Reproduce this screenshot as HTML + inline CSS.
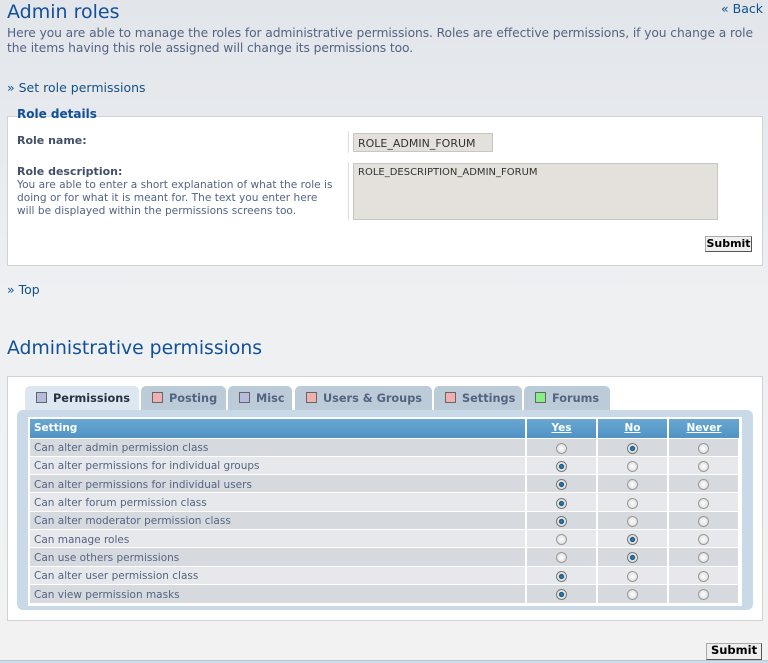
<!DOCTYPE html>
<html><head><meta charset="utf-8"><style>
*{box-sizing:border-box;margin:0;padding:0}
body{width:768px;height:663px;overflow:hidden;font-family:"DejaVu Sans","Liberation Sans",sans-serif;background:linear-gradient(#e2e5ea 0,#eef0f2 300px,#f2f2f2 663px);position:relative;color:#536482}
.a{position:absolute;white-space:nowrap}
h1{position:absolute;left:7px;top:1px;font-weight:normal;font-size:19px;color:#115098;font-family:"DejaVu Sans",sans-serif}
.desc{left:7px;top:26px;font-size:12.3px;line-height:15px;color:#536482;white-space:normal;width:760px;letter-spacing:-0.1px}
.lnk{font-size:12.5px;color:#105289}
.box{position:absolute;background:#fff;border:1px solid #d2d2d2}
.lbl{font-size:11px;font-weight:bold;color:#425067}
.sm{font-size:10.6px;color:#536482;line-height:13px}
.inp{position:absolute;background:#e4e1dc;border:1px solid #c9c6c0;font-size:11px;color:#333;padding:3px 4px}
.btn{position:absolute;background:#efefef;border:1px solid #666;border-color:#aaa #555 #555 #aaa;font-size:11px;font-weight:bold;color:#000;text-align:center;line-height:13px}
.tab{position:absolute;top:386px;height:24px;background:#bccbd8;border-radius:5px 5px 0 0;font-size:11.3px;font-weight:bold;color:#536482;padding:6px 0 0 11px}
.tab i{display:inline-block;width:11px;height:11px;border:1px solid #666;vertical-align:-1px;margin-right:6px}
table{position:absolute;left:30px;top:419px;width:710px;border-collapse:collapse;font-size:10.5px}
th{background:linear-gradient(#6aa7d1,#4f93c4);color:#fff;height:19px;font-size:10.5px;border-right:2px solid #fff;text-align:center}
th:first-child{text-align:left;padding-left:4px}
th u{color:#fff}
td{height:18.3px;border-right:2px solid #fff;border-top:1px solid #fff;text-align:center;color:#536482;padding-top:2px}
td:first-child{text-align:left;padding-left:4px}
tr:nth-child(odd) td{background:#e6e8eb}
tr:nth-child(even) td{background:#d6dade}
.r{display:inline-block;width:11px;height:11px;border-radius:50%;border:1px solid #999;background:radial-gradient(#fff,#d6d6d6);vertical-align:middle}
.r.on{background:radial-gradient(#2e8fd0 0,#12507a 35%,#ddd 45%,#fff 100%);border-color:#777}
</style></head><body>
<h1>Admin roles</h1>
<div class="a lnk" style="right:5px;top:1px">« Back</div>
<div class="a desc">Here you are able to manage the roles for administrative permissions. Roles are effective permissions, if you change a role the items having this role assigned will change its permissions too.</div>
<div class="a lnk" style="left:7px;top:80px">» Set role permissions</div>
<div class="box" style="left:7px;top:116px;width:756px;height:150px"></div>
<div class="a" style="left:17px;top:107px;font-size:12px;font-weight:bold;color:#115098">Role details</div>
<div class="a lbl" style="left:17px;top:134px">Role name:</div>
<div class="a" style="left:348px;top:131px;width:1px;height:22px;background:#ddd"></div>
<div class="inp" style="left:353px;top:133px;width:140px;height:19px">ROLE_ADMIN_FORUM</div>
<div class="a lbl" style="left:17px;top:165px">Role description:</div>
<div class="a sm" style="left:17px;top:179px;white-space:normal;width:318px">You are able to enter a short explanation of what the role is doing or for what it is meant for. The text you enter here will be displayed within the permissions screens too.</div>
<div class="a" style="left:348px;top:162px;width:1px;height:58px;background:#ddd"></div>
<div class="inp" style="left:353px;top:163px;width:365px;height:57px;font-size:10px">ROLE_DESCRIPTION_ADMIN_FORUM</div>
<div class="btn" style="left:705px;top:236px;width:47px;height:16px">Submit</div>
<div class="a lnk" style="left:7px;top:282px">» Top</div>
<div class="a" style="left:7px;top:338px;font-size:18.8px;color:#115098">Administrative permissions</div>
<div class="box" style="left:7px;top:376px;width:756px;height:245px"></div>
<div class="tab" style="left:25px;width:114px;background:#dce7f1;color:#28313f"><i style="background:#b8bbe0"></i>Permissions</div>
<div class="tab" style="left:141px;width:85px"><i style="background:#f0b0b0"></i>Posting</div>
<div class="tab" style="left:228px;width:64px"><i style="background:#b8bbe0"></i>Misc</div>
<div class="tab" style="left:295px;width:137px"><i style="background:#f0b0b0"></i>Users &amp; Groups</div>
<div class="tab" style="left:434px;width:88px"><i style="background:#f0b0b0"></i>Settings</div>
<div class="tab" style="left:524px;width:86px"><i style="background:#88ee88"></i>Forums</div>
<div class="a" style="left:17px;top:410px;width:736px;height:200px;background:#c9d9e7;border-radius:6px"></div>
<div class="a" style="left:28px;top:417px;width:714px;height:189px;background:#fff"></div>
<table>
<tr><th>Setting</th><th style="width:71px"><u>Yes</u></th><th style="width:71px"><u>No</u></th><th style="width:71px;border-right:0"><u>Never</u></th></tr>
<tr><td>Can alter admin permission class</td><td><span class="r"></span></td><td><span class="r on"></span></td><td><span class="r"></span></td></tr>
<tr><td>Can alter permissions for individual groups</td><td><span class="r on"></span></td><td><span class="r"></span></td><td><span class="r"></span></td></tr>
<tr><td>Can alter permissions for individual users</td><td><span class="r on"></span></td><td><span class="r"></span></td><td><span class="r"></span></td></tr>
<tr><td>Can alter forum permission class</td><td><span class="r on"></span></td><td><span class="r"></span></td><td><span class="r"></span></td></tr>
<tr><td>Can alter moderator permission class</td><td><span class="r on"></span></td><td><span class="r"></span></td><td><span class="r"></span></td></tr>
<tr><td>Can manage roles</td><td><span class="r"></span></td><td><span class="r on"></span></td><td><span class="r"></span></td></tr>
<tr><td>Can use others permissions</td><td><span class="r"></span></td><td><span class="r on"></span></td><td><span class="r"></span></td></tr>
<tr><td>Can alter user permission class</td><td><span class="r on"></span></td><td><span class="r"></span></td><td><span class="r"></span></td></tr>
<tr><td>Can view permission masks</td><td><span class="r on"></span></td><td><span class="r"></span></td><td><span class="r"></span></td></tr>
</table>
<div class="btn" style="left:706px;top:643px;width:56px;height:17px;font-size:11.5px">Submit</div>
<div class="a" style="left:0;top:660px;width:768px;height:3px;background:#cfdbe6;border-top:1px solid #b4c6d6"></div>
</body></html>
